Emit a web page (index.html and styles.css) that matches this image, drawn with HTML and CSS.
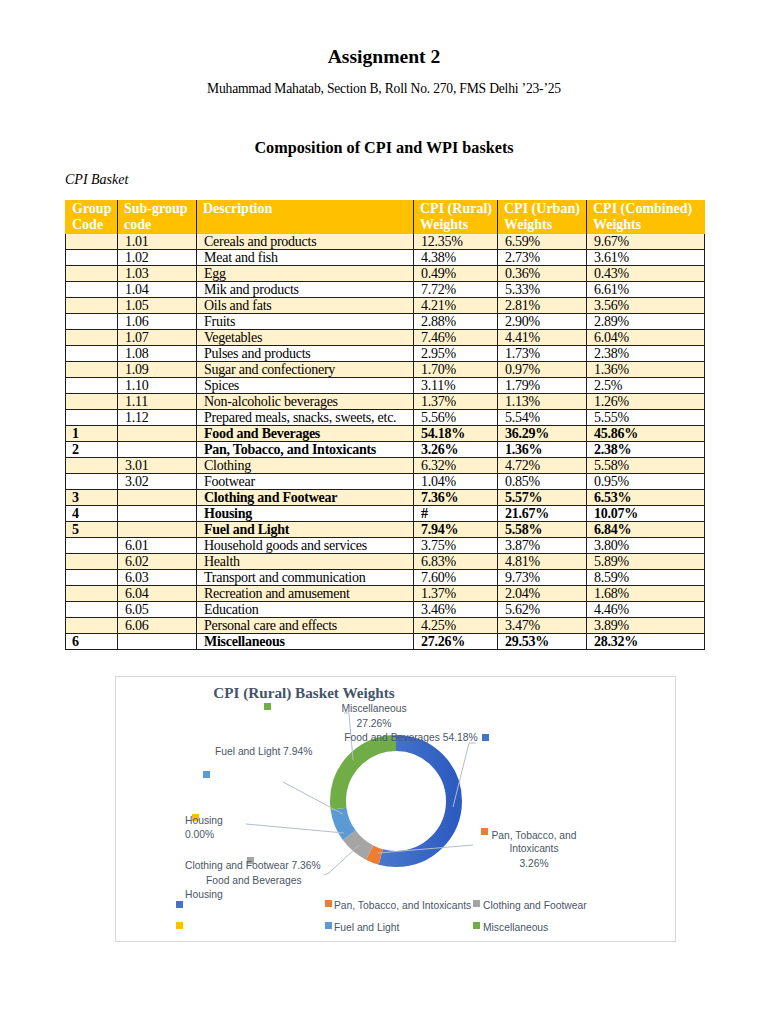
FILE: index.html
```html
<!DOCTYPE html>
<html>
<head>
<meta charset="utf-8">
<title>Assignment 2</title>
<link rel="stylesheet" href="styles.css">
</head>
<body>
<div class="page">
  <h1 class="title">Assignment 2</h1>
  <p class="author">Muhammad Mahatab, Section B, Roll No. 270, FMS Delhi ’23-’25</p>
  <h2 class="heading">Composition of CPI and WPI baskets</h2>
  <p class="caption">CPI Basket</p>
  <table class="basket">
    <colgroup>
      <col class="c1"><col class="c2"><col class="c3"><col class="c4"><col class="c5"><col class="c6">
    </colgroup>
    <thead>
      <tr><th>Group Code</th><th>Sub-group code</th><th>Description</th><th>CPI (Rural) Weights</th><th>CPI (Urban) Weights</th><th>CPI (Combined) Weights</th></tr>
    </thead>
    <tbody>
      <tr><td></td><td>1.01</td><td>Cereals and products</td><td>12.35%</td><td>6.59%</td><td>9.67%</td></tr>
      <tr><td></td><td>1.02</td><td>Meat and fish</td><td>4.38%</td><td>2.73%</td><td>3.61%</td></tr>
      <tr><td></td><td>1.03</td><td>Egg</td><td>0.49%</td><td>0.36%</td><td>0.43%</td></tr>
      <tr><td></td><td>1.04</td><td>Mik and products</td><td>7.72%</td><td>5.33%</td><td>6.61%</td></tr>
      <tr><td></td><td>1.05</td><td>Oils and fats</td><td>4.21%</td><td>2.81%</td><td>3.56%</td></tr>
      <tr><td></td><td>1.06</td><td>Fruits</td><td>2.88%</td><td>2.90%</td><td>2.89%</td></tr>
      <tr><td></td><td>1.07</td><td>Vegetables</td><td>7.46%</td><td>4.41%</td><td>6.04%</td></tr>
      <tr><td></td><td>1.08</td><td>Pulses and products</td><td>2.95%</td><td>1.73%</td><td>2.38%</td></tr>
      <tr><td></td><td>1.09</td><td>Sugar and confectionery</td><td>1.70%</td><td>0.97%</td><td>1.36%</td></tr>
      <tr><td></td><td>1.10</td><td>Spices</td><td>3.11%</td><td>1.79%</td><td>2.5%</td></tr>
      <tr><td></td><td>1.11</td><td>Non-alcoholic beverages</td><td>1.37%</td><td>1.13%</td><td>1.26%</td></tr>
      <tr><td></td><td>1.12</td><td>Prepared meals, snacks, sweets, etc.</td><td>5.56%</td><td>5.54%</td><td>5.55%</td></tr>
      <tr class="group"><td>1</td><td></td><td>Food and Beverages</td><td>54.18%</td><td>36.29%</td><td>45.86%</td></tr>
      <tr class="group"><td>2</td><td></td><td>Pan, Tobacco, and Intoxicants</td><td>3.26%</td><td>1.36%</td><td>2.38%</td></tr>
      <tr><td></td><td>3.01</td><td>Clothing</td><td>6.32%</td><td>4.72%</td><td>5.58%</td></tr>
      <tr><td></td><td>3.02</td><td>Footwear</td><td>1.04%</td><td>0.85%</td><td>0.95%</td></tr>
      <tr class="group"><td>3</td><td></td><td>Clothing and Footwear</td><td>7.36%</td><td>5.57%</td><td>6.53%</td></tr>
      <tr class="group"><td>4</td><td></td><td>Housing</td><td>#</td><td>21.67%</td><td>10.07%</td></tr>
      <tr class="group"><td>5</td><td></td><td>Fuel and Light</td><td>7.94%</td><td>5.58%</td><td>6.84%</td></tr>
      <tr><td></td><td>6.01</td><td>Household goods and services</td><td>3.75%</td><td>3.87%</td><td>3.80%</td></tr>
      <tr><td></td><td>6.02</td><td>Health</td><td>6.83%</td><td>4.81%</td><td>5.89%</td></tr>
      <tr><td></td><td>6.03</td><td>Transport and communication</td><td>7.60%</td><td>9.73%</td><td>8.59%</td></tr>
      <tr><td></td><td>6.04</td><td>Recreation and amusement</td><td>1.37%</td><td>2.04%</td><td>1.68%</td></tr>
      <tr><td></td><td>6.05</td><td>Education</td><td>3.46%</td><td>5.62%</td><td>4.46%</td></tr>
      <tr><td></td><td>6.06</td><td>Personal care and effects</td><td>4.25%</td><td>3.47%</td><td>3.89%</td></tr>
      <tr class="group"><td>6</td><td></td><td>Miscellaneous</td><td>27.26%</td><td>29.53%</td><td>28.32%</td></tr>
    </tbody>
  </table>

  <div class="chart">
    <svg class="chart-svg" width="559" height="264" viewBox="0 0 559 264" xmlns="http://www.w3.org/2000/svg">
      <defs>
        <linearGradient id="blueGrad" x1="0" y1="0" x2="0" y2="1">
          <stop offset="0" stop-color="#5a86d5"/>
          <stop offset="1" stop-color="#2d5cc0"/>
        </linearGradient>
      </defs>
      <text class="chart-title" x="188" y="21" text-anchor="middle">CPI (Rural) Basket Weights</text>

      <g transform="rotate(-90 280 124)" fill="none" stroke-width="16">
        <circle cx="280" cy="124" r="58" stroke="url(#blueGrad)" stroke-dasharray="197.44 364.42" stroke-dashoffset="0"/>
        <circle cx="280" cy="124" r="58" stroke="#ed7d31" stroke-dasharray="11.88 364.42" stroke-dashoffset="-197.44"/>
        <circle cx="280" cy="124" r="58" stroke="#a5a5a5" stroke-dasharray="26.82 364.42" stroke-dashoffset="-209.32"/>
        <circle cx="280" cy="124" r="58" stroke="#5b9bd5" stroke-dasharray="28.93 364.42" stroke-dashoffset="-236.14"/>
        <circle cx="280" cy="124" r="58" stroke="#70ad47" stroke-dasharray="99.35 364.42" stroke-dashoffset="-265.07"/>
      </g>

      <g class="leaders" fill="none">
        <polyline points="228,36 233,36 237,83"/>
        <polyline points="360,66 353,66 337,130"/>
        <polyline points="167,105 227,137"/>
        <polyline points="130,147 228,156"/>
        <polyline points="208,198 213,196 243,168"/>
        <polyline points="357,168 262,176"/>
      </g>

      <rect x="148" y="26" width="7" height="7" fill="#70ad47"/>
      <rect x="366" y="57" width="7" height="7" fill="#4472c4"/>
      <rect x="87" y="94" width="7" height="7" fill="#5b9bd5"/>
      <rect x="76" y="137" width="7" height="7" fill="#ffc000"/>
      <rect x="131" y="180" width="7" height="7" fill="#a5a5a5"/>
      <rect x="365" y="151" width="7" height="7" fill="#ed7d31"/>

      <g class="label">
        <text x="258" y="34.5" text-anchor="middle">Miscellaneous</text>
        <text x="258" y="49.5" text-anchor="middle">27.26%</text>
        <text x="295" y="63.5" text-anchor="middle">Food and Beverages 54.18%</text>
        <text x="99" y="77.5">Fuel and Light 7.94%</text>
        <text x="69" y="146.5">Housing</text>
        <text x="69" y="160.5">0.00%</text>
        <text x="69" y="191.5">Clothing and Footwear 7.36%</text>
        <text x="90" y="206.5">Food and Beverages</text>
        <text x="69" y="220.5">Housing</text>
        <text x="418" y="161.5" text-anchor="middle">Pan, Tobacco, and</text>
        <text x="418" y="174.5" text-anchor="middle">Intoxicants</text>
        <text x="418" y="189.5" text-anchor="middle">3.26%</text>
      </g>

      <rect x="60" y="224" width="7" height="7" fill="#4472c4"/>
      <rect x="60" y="245" width="7" height="7" fill="#ffc000"/>
      <rect x="209" y="223" width="7" height="7" fill="#ed7d31"/>
      <rect x="357" y="223" width="7" height="7" fill="#a5a5a5"/>
      <rect x="209" y="245" width="7" height="7" fill="#5b9bd5"/>
      <rect x="357" y="245" width="7" height="7" fill="#70ad47"/>
      <g class="label">
        <text x="218" y="231.5">Pan, Tobacco, and Intoxicants</text>
        <text x="367" y="231.5">Clothing and Footwear</text>
        <text x="218" y="253.5">Fuel and Light</text>
        <text x="367" y="253.5">Miscellaneous</text>
      </g>
    </svg>
  </div>
</div>
</body>
</html>
```

FILE: styles.css
```css
* { box-sizing: border-box; }
html, body { margin: 0; padding: 0; background: #ffffff; }
body { font-family: "Liberation Serif", "Times New Roman", serif; color: #000; }
.page { width: 768px; height: 1024px; overflow: hidden; }

.title {
  margin: 46px 0 0;
  font-size: 19.6px;
  line-height: 22px;
  font-weight: bold;
  text-align: center;
}
.author {
  margin: 12px 0 0;
  font-size: 13.6px;
  line-height: 18px;
  letter-spacing: -0.2px;
  text-align: center;
}
.heading {
  margin: 40px 0 0;
  font-size: 16.2px;
  line-height: 20px;
  font-weight: bold;
  text-align: center;
}
.caption {
  margin: 13px 0 0 65px;
  font-size: 14px;
  line-height: 18px;
  font-style: italic;
}

.basket {
  margin: 11px 0 0 65px;
  width: 640px;
  table-layout: fixed;
  border-collapse: separate;
  border-spacing: 0;
  font-size: 14px;
  letter-spacing: -0.25px;
}
.c1 { width: 53px; }
.c2 { width: 79px; }
.c3 { width: 217px; }
.c4 { width: 84px; }
.c5 { width: 89px; }
.c6 { width: 118px; }

.basket th {
  background: #ffc000;
  color: #ffffff;
  font-size: 14px;
  letter-spacing: 0;
  font-weight: bold;
  text-align: left;
  vertical-align: top;
  line-height: 16px;
  padding: 1px 0 1px 6px;
  border-right: 1px solid #1e1e1e;
}
.basket th:first-child { border-left: 1px solid #ffc000; }
.basket th:last-child { border-right: 1px solid #ffc000; }

.basket td {
  line-height: 15px;
  height: 16px;
  padding: 0 0 0 7px;
  border-right: 1px solid #1e1e1e;
  border-bottom: 1px solid #1e1e1e;
  white-space: nowrap;
  overflow: hidden;
}
.basket td:first-child { border-left: 1px solid #1e1e1e; padding-left: 6px; }
.basket tbody tr:nth-child(odd) td { background: #fff2cc; }
.basket tr.group td { font-weight: bold; }

.chart {
  margin: 26px 0 0 115px;
  width: 561px;
  height: 266px;
  border: 1px solid #d9d9d9;
}
.chart-svg { display: block; }
.chart-title {
  font-family: "Liberation Serif", "Times New Roman", serif;
  font-weight: bold;
  font-size: 15.2px;
  fill: #44546a;
}
.leaders polyline { stroke: #b3bdca; stroke-width: 1; }
.label text {
  font-family: "Liberation Sans", Arial, sans-serif;
  font-size: 10.3px;
  fill: #4a5668;
}
```
